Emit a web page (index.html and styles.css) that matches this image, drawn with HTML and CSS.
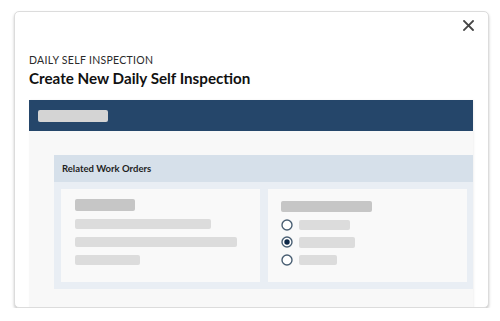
FILE: index.html
```html
<!DOCTYPE html>
<html>
<head>
<meta charset="utf-8">
<link rel="stylesheet" href="styles.css">
</head>
<body>
<div class="modal">
  <div class="close-row">
    <svg class="close" width="11" height="11" viewBox="0 0 11 11"><path d="M1 1L10 10M10 1L1 10" stroke="#454545" stroke-width="1.8" stroke-linecap="square"/></svg>
  </div>
  <div class="eyebrow">DAILY SELF INSPECTION</div>
  <h1 class="title">Create New Daily Self Inspection</h1>
  <div class="content">
    <div class="banner"><div class="banner-bar"></div></div>
    <div class="body">
      <div class="section">
        <div class="section-head">Related Work Orders</div>
        <div class="section-body">
          <div class="card">
            <div class="bar bar-strong w60"></div>
            <div class="bar w136"></div>
            <div class="bar w162"></div>
            <div class="bar w65"></div>
          </div>
          <div class="card card-right">
            <div class="bar bar-strong w91"></div>
            <div class="radios">
              <div class="radio-row">
                <svg class="radio" width="12" height="12" viewBox="0 0 12 12"><circle cx="6" cy="6" r="5" fill="#fff" stroke="#4a5f73" stroke-width="1.4"/></svg>
                <div class="bar w51"></div>
              </div>
              <div class="radio-row">
                <svg class="radio" width="12" height="12" viewBox="0 0 12 12"><circle cx="6" cy="6" r="5" fill="#fff" stroke="#4a5f73" stroke-width="1.4"/><circle cx="6" cy="6" r="2.7" fill="#0d2747"/></svg>
                <div class="bar w56"></div>
              </div>
              <div class="radio-row">
                <svg class="radio" width="12" height="12" viewBox="0 0 12 12"><circle cx="6" cy="6" r="5" fill="#fff" stroke="#4a5f73" stroke-width="1.4"/></svg>
                <div class="bar w38"></div>
              </div>
            </div>
          </div>
        </div>
      </div>
    </div>
  </div>
</div>
</body>
</html>
```

FILE: styles.css
```css
* { box-sizing: border-box; }
html, body { margin: 0; padding: 0; background: #fff; }
body { font-family: Lato, "Open Sans", sans-serif; color: #1e1e1e; }

.modal {
  margin: 11px 0 0 14px;
  width: 475px;
  height: 297px;
  border: 1px solid #dcdcdc;
  border-radius: 5px;
  box-shadow: 0 2px 3px rgba(0,0,0,0.22);
  padding: 8px 14px 0 14px;
  overflow: hidden;
  background: #fff;
}
.close-row { display: flex; justify-content: flex-end; height: 11px; }
.close { display: block; }

.eyebrow {
  margin-top: 23px;
  font-size: 10.5px;
  line-height: 13px;
  letter-spacing: 0.3px;
  color: #2a2a2a;
}
.title {
  margin: 2px 0 0 0;
  font-size: 15.2px;
  line-height: 19px;
  font-weight: 700;
  color: #111;
}
.content {
  margin-top: 12px;
  margin-right: 1px;
  box-shadow: 1px 0 2px rgba(0,0,0,0.06);
}
.banner {
  height: 31px;
  background: #25466a;
  padding: 10px 9px;
}
.banner-bar {
  width: 70px;
  height: 12px;
  background: #d4d4d4;
  border-radius: 2px;
}
.body {
  background: #f8f8f8;
  padding: 24px 0 30px 25px;
}
.section-head {
  height: 27px;
  background: #d6e0ea;
  padding-left: 8px;
  display: flex;
  align-items: center;
  font-size: 9.5px;
  font-weight: 700;
  color: #1f1f1f;
}
.section-body {
  background: #e9eef4;
  padding: 7px 6px 7px 7px;
  display: grid;
  grid-template-columns: 1fr 1fr;
  gap: 8px;
}
.card {
  background: #f9f9f9;
  height: 93px;
  padding: 10px 14px;
  display: flex;
  flex-direction: column;
  gap: 8px;
}
.card-right { padding: 12px 13px; gap: 7px; }
.bar { height: 10px; background: #dcdcdc; border-radius: 2px; }
.bar-strong { height: 12px; background: #c6c6c6; }
.card-right .bar-strong { height: 11px; }
.w60 { width: 60px; }
.w136 { width: 136px; }
.w162 { width: 162px; }
.w65 { width: 65px; }
.w91 { width: 91px; }
.w51 { width: 51px; }
.w56 { width: 56px; }
.w38 { width: 38px; }
.radios { display: flex; flex-direction: column; gap: 6px; }
.radio-row { display: flex; align-items: center; gap: 6px; height: 11.5px; }
.radio { display: block; flex: none; }
.radio-row .bar { height: 10.5px; }
```
